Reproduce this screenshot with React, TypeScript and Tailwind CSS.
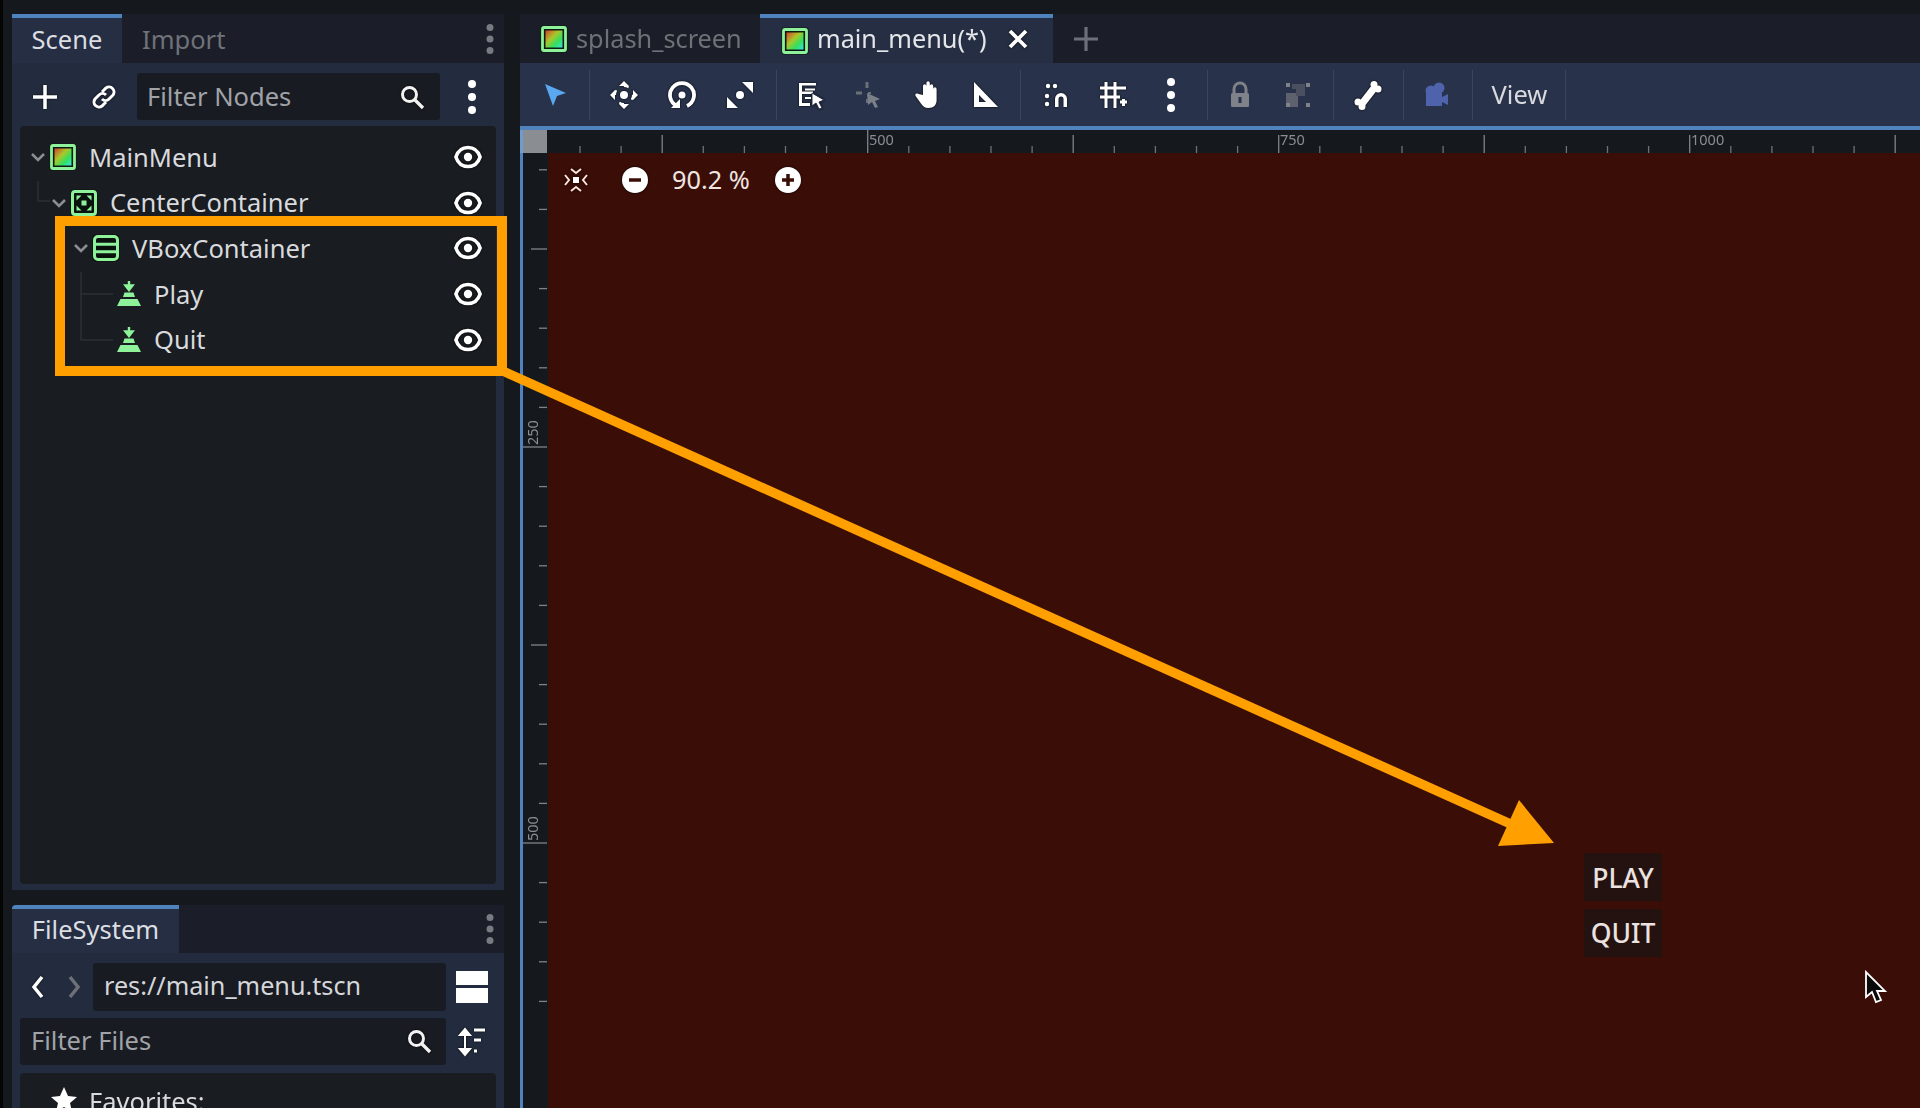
import React from "react";

const halo = "[filter:drop-shadow(0_0_1px_rgba(0,0,0,0.9))]";

const Chevron = ({ c = "#8a8d92" }: { c?: string }) => (
  <svg width="16" height="10" viewBox="0 0 16 10" className="shrink-0 mr-[3px]">
    <path d="M2 2l6 6 6-6" fill="none" stroke={c} strokeWidth="2.6" />
  </svg>
);

const SceneIcon = ({ id }: { id: string }) => (
  <svg width="28" height="28" viewBox="0 0 28 28" className="shrink-0">
    <defs>
      <linearGradient id={id} x1="0" y1="0" x2="1" y2="1">
        <stop offset="0" stopColor="#d8402a" />
        <stop offset="0.4" stopColor="#a8c82a" />
        <stop offset="0.7" stopColor="#30e060" />
        <stop offset="1" stopColor="#40e0e0" />
      </linearGradient>
    </defs>
    <rect x="0.5" y="0.5" width="27" height="27" rx="2.5" fill="#0d1a12" />
    <rect x="2.5" y="2.5" width="23" height="23" rx="1.5" fill="none" stroke="#8ef29a" strokeWidth="2.8" />
    <rect x="5.500" y="5.500" width="17" height="17" fill={`url(#${id})`} />
  </svg>
);

const CenterIcon = () => (
  <svg width="28" height="28" viewBox="0 0 28 28" className="shrink-0">
    <rect x="0.5" y="0.5" width="27" height="27" rx="3" fill="#0a120e" />
    <rect x="2.5" y="2.5" width="23" height="23" rx="2.5" fill="none" stroke="#8ef29a" strokeWidth="3" />
    <rect x="11.500" y="11.500" width="5" height="5" fill="#8ef29a" />
    <path d="M6.500 6.500h5l-5 5zM21.500 6.500h-5l5 5zM6.500 21.500h5l-5-5zM21.500 21.500h-5l5-5z" fill="#8ef29a" />
  </svg>
);

const VBoxIcon = () => (
  <svg width="28" height="28" viewBox="0 0 28 28" className="shrink-0">
    <rect x="0.5" y="0.5" width="27" height="27" rx="4" fill="#0a120e" />
    <rect x="2.500" y="2.500" width="23" height="23" rx="3.500" fill="none" stroke="#8ef29a" strokeWidth="3" />
    <path d="M3 10.200h22M3 17.800h22" stroke="#8ef29a" strokeWidth="3" />
  </svg>
);

const ButtonIcon = () => (
  <svg width="26" height="26" viewBox="0 0 26 26" className="shrink-0">
    <path d="M13 0v5M9.500 4.500L13 9l3.500-4.500z" stroke="#8ef29a" strokeWidth="2.400" fill="#8ef29a" />
    <path d="M8.500 11.500h9l1.500 4.500H7zM4.500 18h17l3.500 7H1z" fill="#8ef29a" />
  </svg>
);

const Eye = () => (
  <svg width="28" height="24" viewBox="0 0 28 24" className={`shrink-0 ${halo}`}>
    <path d="M1.900 12C4 5.500 9 2.500 14 2.500s10 3 12.100 9.500C24 18.500 19 21.500 14 21.500S4 18.500 1.900 12z" fill="none" stroke="#fff" strokeWidth="3.600" />
    <circle cx="14" cy="12" r="4.200" fill="#fff" />
  </svg>
);

const Search = () => (
  <svg width="26" height="26" viewBox="0 0 26 26" className={`shrink-0 ${halo}`}>
    <circle cx="10.500" cy="10.500" r="7" fill="none" stroke="#f2f2f2" strokeWidth="3" />
    <path d="M16 16l8 8" stroke="#f2f2f2" strokeWidth="3.400" />
  </svg>
);

const Dots = ({ c = "#fff", r = 4, gap = 13 }: { c?: string; r?: number; gap?: number }) => (
  <svg width="12" height={gap * 2 + r * 2 + 2} className="shrink-0">
    {[0, 1, 2].map((i) => (
      <circle key={i} cx="6" cy={r + 1 + i * gap} r={r} fill={c} />
    ))}
  </svg>
);

const Ico = ({ children, w = 30, h = 30 }: { children: React.ReactNode; w?: number; h?: number }) => (
  <svg width={w} height={h} viewBox="0 0 30 30" className={halo}>
    {children}
  </svg>
);

const Sep = ({ className }: { className: string }) => <div className={`w-px h-[50px] bg-[#3b4459] shrink-0 ${className}`} />;

const Row = ({ pad, icon, label, chev }: { pad: string; icon: React.ReactNode; label: string; chev: boolean }) => (
  <div className={`flex items-center h-[45.7px] pr-[14px] ${pad}`}>
    {chev && <Chevron />}
    {icon}
    <span className="ml-[12px] text-[25.500px] text-[#d8dadd]">{label}</span>
    <div className="ml-auto flex">
      <Eye />
    </div>
  </div>
);

const topMinor = Array.from({ length: 34 }, (_, i) => 581 + i * 41.1 - 548);
const leftMinor = Array.from({ length: 25 }, (_, i) => 11 + i * 39.6 - 153 + 40);

export default function App() {
  return (
    <div className="relative w-[1920px] h-[1108px] overflow-hidden bg-[#15181c]">
      <div className="flex w-[1920px] h-[1108px] font-['Noto_Sans',sans-serif] border-l-[3px] border-l-[#050505] blur-[0.5px]">
        {/* left column */}
        <div className="w-[517px] shrink-0 pl-[9px] pr-[16px] pt-[14px] flex flex-col">
          {/* Scene dock */}
          <div className="h-[876px] flex flex-col bg-[#232c3f] rounded-t-[4px]">
            <div className="h-[49px] flex bg-[#1b1e28] shrink-0">
              <div className="w-[110px] border-t-[4px] border-[#4f83bd] bg-[#252e42] flex items-center justify-center pb-[2px] text-[25.500px] text-[#dcdee2]">
                Scene
              </div>
              <div className="ml-[20px] pt-[1px] flex items-center text-[25.500px] text-[#6f7278]">Import</div>
              <div className="ml-auto mr-[8px] flex items-center">
                <Dots c="#777a80" r={3.500} gap={11.500} />
              </div>
            </div>
            <div className="h-[63px] pt-[4px] flex items-center shrink-0 pl-[20px]">
              <svg width="26" height="26" viewBox="0 0 26 26" className={`shrink-0 ${halo}`}>
                <path d="M13 1v24M1 13h24" stroke="#fff" strokeWidth="3.500" />
              </svg>
              <svg width="28" height="28" viewBox="0 0 28 28" className={`ml-[32px] shrink-0 ${halo}`}>
                <path d="M12 9l4-4a5 5 0 017 7l-4 4a5 5 0 01-7 0M16 19l-4 4a5 5 0 01-7-7l4-4a5 5 0 017 0" fill="none" stroke="#fff" strokeWidth="3" />
              </svg>
              <div className="ml-[19px] w-[303px] h-[47px] bg-[#191b22] rounded-[3px] flex items-center px-[10px]">
                <span className="text-[25.500px] text-[#a0a3a8]">Filter Nodes</span>
                <div className="ml-auto mr-[5px] flex">
                  <Search />
                </div>
              </div>
              <div className="ml-[26px] flex">
                <Dots />
              </div>
            </div>
            <div className="relative mx-[8px] mb-[6px] flex-1 bg-[#191c20] rounded-[4px] pt-[8px]">
              <svg className="absolute left-0 top-0" width="120" height="240">
                <path d="M18 55v20h12M61 146v68h32M61 168h32" fill="none" stroke="#2c2f34" strokeWidth="1.500" />
              </svg>
              <Row pad="pl-[10px]" chev icon={<SceneIcon id="g1" />} label="MainMenu" />
              <Row pad="pl-[31px]" chev icon={<CenterIcon />} label="CenterContainer" />
              <Row pad="pl-[53px]" chev icon={<VBoxIcon />} label="VBoxContainer" />
              <Row pad="pl-[96px]" chev={false} icon={<ButtonIcon />} label="Play" />
              <Row pad="pl-[96px]" chev={false} icon={<ButtonIcon />} label="Quit" />
            </div>
          </div>
          {/* FileSystem dock */}
          <div className="mt-[15px] flex-1 flex flex-col bg-[#232c3f] rounded-t-[4px] overflow-hidden">
            <div className="h-[48px] flex bg-[#1b1e28] shrink-0">
              <div className="w-[167px] border-t-[4px] border-[#4f83bd] bg-[#252e42] flex items-center justify-center pb-[4px] text-[25.500px] text-[#dcdee2]">
                FileSystem
              </div>
              <div className="ml-auto mr-[8px] flex items-center">
                <Dots c="#777a80" r={3.500} gap={11.500} />
              </div>
            </div>
            <div className="mt-[10px] h-[48px] flex items-center shrink-0 pl-[19px]">
              <svg width="14" height="26" viewBox="0 0 14 26" className={`shrink-0 ${halo}`}>
                <path d="M11 3L3 13l8 10" fill="none" stroke="#fff" strokeWidth="3.500" />
              </svg>
              <svg width="14" height="26" viewBox="0 0 14 26" className="ml-[22px] shrink-0">
                <path d="M3 3l8 10-8 10" fill="none" stroke="#6d7076" strokeWidth="3.500" />
              </svg>
              <div className="ml-[12px] w-[353px] h-[48px] bg-[#191b22] rounded-[3px] flex items-center px-[11px] pb-[2px] text-[25.200px] text-[#d4d6da]">
                res://main_menu.tscn
              </div>
              <div className="ml-[10px] w-[32px] h-[32px] flex flex-col justify-between shrink-0">
                <div className="h-[14px] bg-white" />
                <div className="h-[15px] bg-white" />
              </div>
            </div>
            <div className="mt-[7px] h-[47px] flex items-center shrink-0 pl-[8px]">
              <div className="w-[426px] h-[47px] bg-[#191b22] rounded-[3px] flex items-center px-[11px] pb-[2px]">
                <span className="text-[25.500px] text-[#a0a3a8]">Filter Files</span>
                <div className="ml-auto mr-[3px] flex">
                  <Search />
                </div>
              </div>
              <svg width="30" height="32" viewBox="0 0 30 32" className={`ml-[11px] shrink-0 ${halo}`}>
                <path d="M8 4v24M3 9l5-6 5 6zM3 23l5 6 5-6z" fill="#fff" stroke="#fff" strokeWidth="2" />
                <path d="M17 4h11M17 14h7M17 25h3" stroke="#fff" strokeWidth="3" />
              </svg>
            </div>
            <div className="mt-[8px] mx-[8px] flex-1 bg-[#191c20] rounded-t-[4px] pl-[30px] pt-[13px] flex gap-[11px] items-start">
              <svg width="28" height="28" viewBox="0 0 28 28" className="shrink-0">
                <path d="M14 1l4 9 9 1-7 6 2 9-8-5-8 5 2-9-7-6 9-1z" fill="#fff" />
              </svg>
              <span className="text-[25.500px] text-[#d8dadd] leading-[30px]">Favorites:</span>
            </div>
          </div>
        </div>

        {/* main column */}
        <div className="flex-1 min-w-0 pt-[14px] flex flex-col">
          <div className="h-[49px] bg-[#1b1e28] flex shrink-0">
            <div className="w-[240px] flex items-center pl-[20px]">
              <SceneIcon id="g2" />
              <span className="ml-[8px] pt-[1px] text-[25.300px] text-[#6e7176]">splash_screen</span>
            </div>
            <div className="w-[293px] border-t-[4px] border-[#4f83bd] bg-[#252e42] flex items-center pl-[21px]">
              <SceneIcon id="g3" />
              <span className="ml-[8px] pb-[3px] text-[25.300px] text-[#e4e6e9]">main_menu(*)</span>
              <svg width="22" height="22" viewBox="0 0 22 22" className={`ml-[20px] mb-[3px] shrink-0 ${halo}`}>
                <path d="M3 3l16 16M19 3L3 19" stroke="#fff" strokeWidth="3.800" />
              </svg>
            </div>
            <div className="ml-[20px] flex items-center">
              <svg width="26" height="26" viewBox="0 0 26 26">
                <path d="M13 1v24M1 13h24" stroke="#6c707a" strokeWidth="3.200" />
              </svg>
            </div>
          </div>

          {/* toolbar */}
          <div className="h-[63px] bg-[#28324a] flex items-center shrink-0 pl-[6px]">
            <div className="w-[58px] flex justify-center">
              <svg width="30" height="30" viewBox="0 0 30 30">
                <path d="M5 4l21 9-9 3-4 10z" fill="#5aa8f0" />
              </svg>
            </div>
            <Sep className="ml-[5px] mr-[5px]" />
            <div className="w-[58px] flex justify-center">
              <Ico>
                <path d="M15 1l5 5H10zM15 29l5-5H10zM1 15l5-5v10zM29 15l-5-5v10z" fill="#fff" />
                <circle cx="15" cy="15" r="4" fill="#fff" />
                <circle cx="15" cy="15" r="9" fill="none" stroke="#fff" strokeWidth="2" strokeDasharray="5 9" />
              </Ico>
            </div>
            <div className="w-[58px] flex justify-center">
              <Ico>
                <path d="M10 26a12 12 0 1110 0" fill="none" stroke="#fff" strokeWidth="3.800" />
                <circle cx="15" cy="15" r="3.500" fill="#fff" />
                <path d="M4 28h9v-9z" fill="#fff" />
              </Ico>
            </div>
            <div className="w-[58px] flex justify-center">
              <Ico>
                <path d="M17 2h11v11zM2 17v11h11z" fill="#fff" />
                <circle cx="15" cy="15" r="4" fill="#fff" />
              </Ico>
            </div>
            <Sep className="ml-[7px] mr-[3px]" />
            <div className="w-[58.500px] flex justify-center pl-[3px]">
              <Ico>
                <path d="M3 3h17v2.500H6v6h11v2.500H6v9h8v3H3z M9 8.500h10v2H9z M9 17h6v2H9z" fill="#fff" />
                <path d="M16 13l12 7-5 2 3 6-3 1-3-6-4 3z" fill="#fff" stroke="#28324a" strokeWidth="1" />
              </Ico>
            </div>
            <div className="w-[58.500px] flex justify-center pl-[3px]">
              <svg width="30" height="30" viewBox="0 0 30 30">
                <path d="M13 2v6M2 13h6" stroke="#6b7078" strokeWidth="3" />
                <path d="M13 13l13 6-5 2 3 6-3 1-3-6-4 3z" fill="#7a7f88" />
                <path d="M13 19v4M17 13h-3" stroke="#6b7078" strokeWidth="2" />
              </svg>
            </div>
            <div className="w-[58.500px] flex justify-center pl-[3px]">
              <Ico>
                <path d="M10 15V6a1.700 1.700 0 013.400 0v-3a1.700 1.700 0 013.400 0v3a1.700 1.700 0 013.400 0v3a1.700 1.700 0 013.400 0v11c0 5-3 8-8 8-4 0-6-2-8-5l-5-7c-1-2 1-3 3-2z" fill="#fff" />
              </Ico>
            </div>
            <div className="w-[58.500px] flex justify-center">
              <Ico>
                <path fillRule="evenodd" d="M4 2l24 25H4zM9 15v7h7z" fill="#fff" />
              </Ico>
            </div>
            <Sep className="ml-[6px] mr-[5px]" />
            <div className="w-[58px] flex justify-center pl-[2px]">
              <Ico>
                <path d="M14 27V19a6 6 0 0112 0v8h-3.500v-8a2.500 2.500 0 00-5 0v8z" fill="#fff" />
                <circle cx="6" cy="16" r="2.200" fill="#fff" />
                <circle cx="6" cy="24" r="2.200" fill="#fff" />
                <circle cx="14" cy="6" r="2.200" fill="#fff" />
                <circle cx="7" cy="6" r="2.200" fill="#fff" />
              </Ico>
            </div>
            <div className="w-[58px] flex justify-center">
              <Ico>
                <path d="M8 2v26M17 2v26M2 8h26M2 17h20M22 22h7M25.500 19v7" stroke="#fff" strokeWidth="3" fill="none" />
              </Ico>
            </div>
            <div className="w-[58px] flex justify-center">
              <Dots />
            </div>
            <Sep className="ml-[6.500px] mr-[3px]" />
            <div className="w-[58.500px] flex justify-center">
              <svg width="30" height="30" viewBox="0 0 30 30">
                <path d="M9 14V9a6 6 0 0112 0v5" fill="none" stroke="#7f8288" strokeWidth="3" />
                <rect x="6" y="13" width="18" height="14" rx="1.500" fill="#7f8288" />
                <rect x="13.500" y="17" width="3" height="6" fill="#28324a" />
              </svg>
            </div>
            <div className="w-[58.500px] flex justify-center">
              <svg width="30" height="30" viewBox="0 0 30 30">
                <path d="M3 13h12v14H3z" fill="#5d626e" />
                <path d="M3 3h4v4H3zM23 3h4v4h-4zM3 23h4v4H3zM23 23h4v4h-4z" fill="#7f8288" />
                <path d="M9 4h13v12h-9V9H9z" fill="#4a5060" />
              </svg>
            </div>
            <Sep className="ml-[5px] mr-[5px]" />
            <div className="w-[58px] flex justify-center">
              <Ico>
                <path d="M8 25l14-18" stroke="#fff" strokeWidth="7" />
                <circle cx="21" cy="4.500" r="3.500" fill="#fff" />
                <circle cx="25" cy="9" r="3.500" fill="#fff" />
                <circle cx="5" cy="22" r="3.500" fill="#fff" />
                <circle cx="9" cy="26.500" r="3.500" fill="#fff" />
              </Ico>
            </div>
            <Sep className="ml-[6px] mr-[3px]" />
            <div className="w-[58px] flex justify-center">
              <svg width="30" height="30" viewBox="0 0 30 30">
                <circle cx="10" cy="11" r="5.500" fill="#4e63ab" />
                <circle cx="18" cy="8" r="5.500" fill="#4e63ab" />
                <path d="M5 13h16v13H5zM21 17l6-3v11l-6-3z" fill="#4e63ab" />
              </svg>
            </div>
            <Sep className="ml-[7px]" />
            <div className="ml-[19px] pb-[1px] text-[25.500px] text-[#d8dadd]">View</div>
            <Sep className="ml-[18px]" />
          </div>
          <div className="h-[4px] bg-[#4f83bd] shrink-0" />

          {/* canvas */}
          <div className="flex-1 flex flex-col min-h-0">
            <div className="h-[23px] flex shrink-0">
              <div className="w-[27px] bg-[#8a8d92] border-l-[3px] border-l-[#6f9ccc] shrink-0" />
              <svg width="1373" height="23" className="bg-[#15191e] shrink-0">
                {topMinor.map((x, i) => {
                  const major = Math.abs((x - 321.000) % 411.000) < 1;
                  const mid = i % 5 === 2;
                  return (
                    <line
                      key={i}
                      x1={x}
                      x2={x}
                      y1={major ? 0 : mid ? 5 : 16}
                      y2="23"
                      stroke={major || mid ? "#7f848b" : "#6e7278"}
                      strokeWidth="1.300"
                    />
                  );
                })}
                <text x="322" y="15" fontSize="14.500" fill="#8a8e94">500</text>
                <text x="733" y="15" fontSize="14.500" fill="#8a8e94">750</text>
                <text x="1144" y="15" fontSize="14.500" fill="#8a8e94">1000</text>
              </svg>
            </div>
            <div className="flex-1 flex min-h-0">
              <div className="w-[3px] bg-[#4f83bd] shrink-0" />
              <svg width="25" height="955" className="bg-[#15191e] shrink-0">
                {leftMinor.map((y, i) => {
                  const major = Math.abs(((y + 153 - 447 + 3960) % 396)) < 1;
                  const mid = Math.abs(((y + 153 - 249 + 3960) % 198)) < 1;
                  return (
                    <line key={i} x1={major ? 0 : mid ? 8 : 16} x2="24" y1={y} y2={y} stroke="#7f848b" strokeWidth="1.300" />
                  );
                })}
                <text transform="translate(15 292) rotate(-90)" fontSize="14.500" fill="#8a8e94">250</text>
                <text transform="translate(15 688) rotate(-90)" fontSize="14.500" fill="#8a8e94">500</text>
              </svg>
              <div className="relative flex-1 bg-[#3a0d07] min-w-0">
                <div className="flex items-center h-[54px] pl-[15px]">
                  <svg width="26" height="26" viewBox="0 0 26 26" className={`shrink-0 ${halo}`}>
                    <rect x="10" y="10" width="6" height="6" fill="#fff" />
                    <path d="M8 2l5 4 5-4M8 24l5-4 5 4M2 8l4 5-4 5M24 8l-4 5 4 5" fill="none" stroke="#ffe4dc" strokeWidth="2" />
                  </svg>
                  <svg width="26" height="26" viewBox="0 0 26 26" className={`ml-[33px] shrink-0 ${halo}`}>
                    <circle cx="13" cy="13" r="13" fill="#fff" />
                    <path d="M7 13h12" stroke="#3a0d07" strokeWidth="3.500" />
                  </svg>
                  <span className="ml-[24px] text-[25.300px] text-[#f0e4e0]">90.2 %</span>
                  <svg width="26" height="26" viewBox="0 0 26 26" className={`ml-[25px] shrink-0 ${halo}`}>
                    <circle cx="13" cy="13" r="13" fill="#fff" />
                    <path d="M7 13h12M13 7v12" stroke="#3a0d07" strokeWidth="3.500" />
                  </svg>
                </div>
                <div className="absolute left-[1036px] top-[700px] flex flex-col gap-[8px]">
                  <div className="w-[78px] h-[48px] bg-[#241210] flex items-center justify-center pt-[3px] font-medium text-[26.500px] text-[#ece2e0]">PLAY</div>
                  <div className="w-[78px] h-[48px] bg-[#241210] flex items-center justify-center pt-[2px] font-medium text-[26.500px] text-[#ece2e0]">QUIT</div>
                </div>
                <svg width="26" height="36" viewBox="0 0 26 36" className="absolute left-[1316px] top-[817px]">
                  <path d="M2 2v25l6-5 4 10 5-2-4-9h8z" fill="#0a0a0a" stroke="#fff" strokeWidth="1.800" />
                </svg>
              </div>
            </div>
          </div>
        </div>
      </div>

      {/* annotation overlay */}
      <svg width="1920" height="1108" className="absolute left-0 top-0 pointer-events-none">
        <rect x="60" y="221" width="442" height="150" fill="none" stroke="#ff9f00" strokeWidth="10" />
        <path d="M505 372L1515 826" stroke="#ff9f00" strokeWidth="9.500" />
        <path d="M1519 800L1554 843L1498 846z" fill="#ff9f00" />
      </svg>
    </div>
  );
}
